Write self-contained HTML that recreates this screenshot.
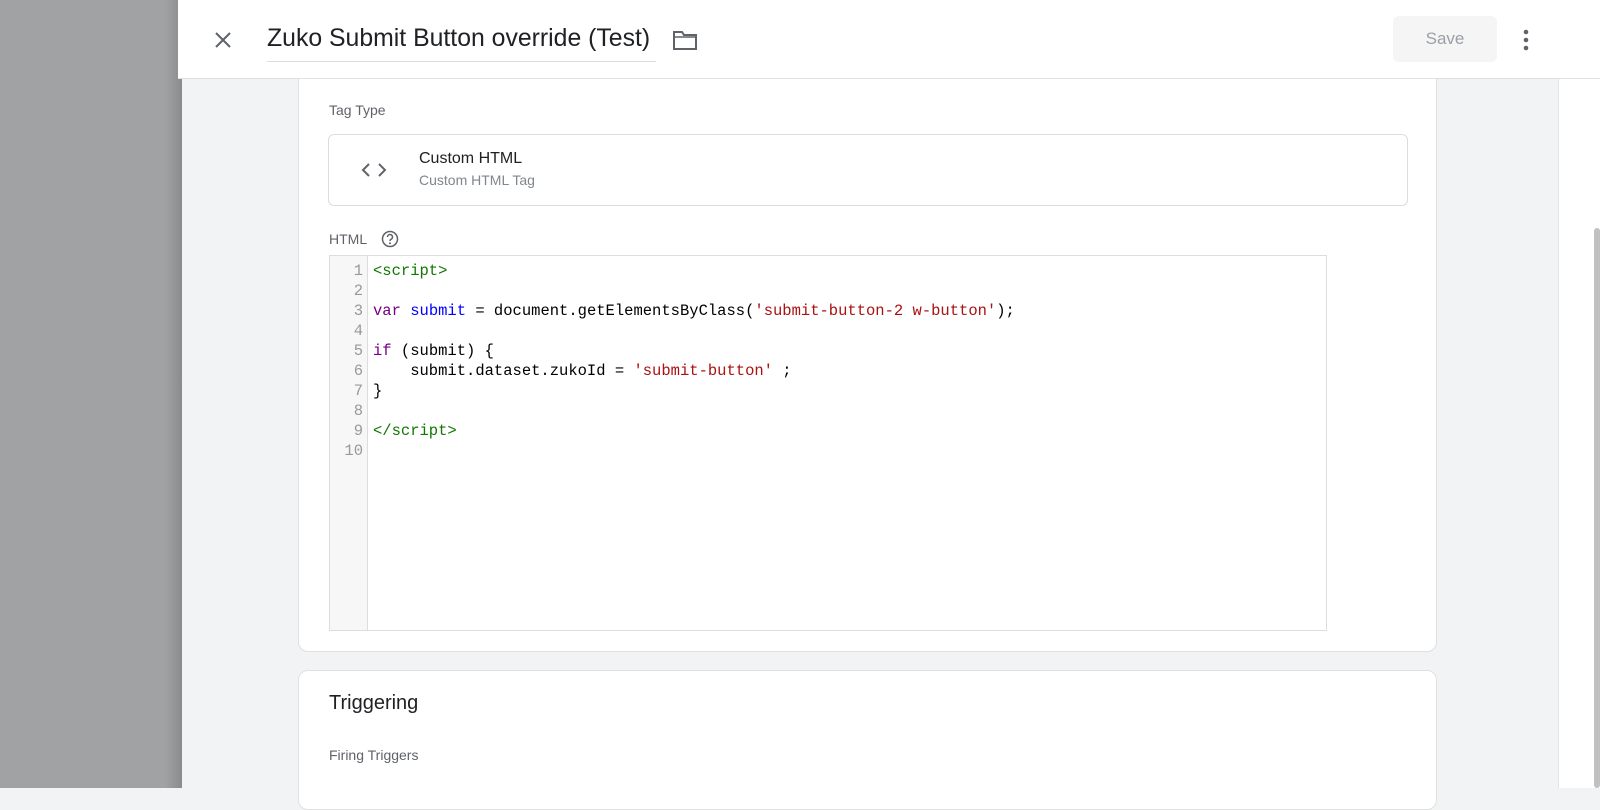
<!DOCTYPE html>
<html><head><style>
*{margin:0;padding:0;box-sizing:border-box}
body{width:1600px;height:788px;overflow:hidden;background:#f1f3f4;font-family:"Liberation Sans",sans-serif;position:relative}
.left{position:absolute;left:0;top:0;width:182px;height:788px;background:linear-gradient(to right,#a1a2a4 0,#a1a2a4 165px,#8a8b8d 182px)}
.hdr{position:absolute;left:178px;top:0;width:1422px;height:79px;background:#fff;border-bottom:1px solid #e0e0e0;z-index:2}
.card{position:absolute;left:298px;width:1139px;background:#fff;border:1px solid #e0e0e0;border-radius:10px}
.code{position:absolute;left:329px;top:255px;width:998px;height:376px;border:1px solid #ddd;background:#fff;font-family:"Liberation Mono",monospace;font-size:15.5px;line-height:20px}
.gut{position:absolute;left:0;top:0;width:38px;height:100%;background:#f7f7f7;border-right:1px solid #ddd;color:#999;text-align:right;padding:5px 4px 0 0}
.lines{position:absolute;left:43px;top:5px;white-space:pre;color:#000}
.t{color:#170}.k{color:#708}.v{color:#00f}.s{color:#a11}
.scroll{position:absolute;left:1558px;top:79px;width:42px;height:709px;background:#fff;border-left:1px solid #e4e4e4}
.thumb{position:absolute;left:1594px;top:228px;width:6px;height:560px;background:#c1c1c1;border-radius:3px}
</style></head><body>
<div class="left"></div>
<div class="card" style="top:60px;height:592px"></div>
<div class="card" style="top:670px;height:140px"></div>
<div class="hdr">
<svg style="position:absolute;left:36px;top:31px" width="18" height="18" viewBox="0 0 18 18"><path d="M2 2L16 16M16 2L2 16" stroke="#5f6368" stroke-width="2"/></svg>
<div style="position:absolute;left:89px;top:25px;font-size:24.8px;color:#202124;width:389px;border-bottom:1px solid #dadce0;height:37px;white-space:nowrap">Zuko Submit Button override (Test)</div>
<svg style="position:absolute;left:494px;top:29px" width="26" height="22" viewBox="0 0 26 22"><path d="M2 3h8l2 3h12v14H2z" fill="none" stroke="#5f6368" stroke-width="2"/><path d="M2 8h22" stroke="#5f6368" stroke-width="1.5"/></svg>
<div style="position:absolute;left:1215px;top:16px;width:104px;height:46px;background:#f5f5f5;border-radius:6px;color:#9aa0a6;font-size:17px;text-align:center;line-height:46px">Save</div>
<svg style="position:absolute;left:1345px;top:29px" width="6" height="22" viewBox="0 0 6 22"><circle cx="3" cy="3" r="2.3" fill="#5f6368"/><circle cx="3" cy="11" r="2.3" fill="#5f6368"/><circle cx="3" cy="19" r="2.3" fill="#5f6368"/></svg>
</div>
<div style="position:absolute;left:329px;top:102px;font-size:14px;color:#5f6368">Tag Type</div>
<div style="position:absolute;left:328px;top:134px;width:1080px;height:72px;border:1px solid #dadce0;border-radius:6px;background:#fff">
<svg style="position:absolute;left:32px;top:27px" width="26" height="16" viewBox="0 0 26 16"><path d="M8 2L2 8l6 6M18 2l6 6-6 6" fill="none" stroke="#5f6368" stroke-width="2"/></svg>
<div style="position:absolute;left:90px;top:15px;font-size:16px;color:#202124">Custom HTML</div>
<div style="position:absolute;left:90px;top:37px;font-size:14px;color:#80868b">Custom HTML Tag</div>
</div>
<div style="position:absolute;left:329px;top:231px;font-size:14px;color:#5f6368">HTML</div>
<svg style="position:absolute;left:381px;top:230px" width="18" height="18" viewBox="0 0 18 18"><circle cx="9" cy="9" r="7.5" fill="none" stroke="#5f6368" stroke-width="1.5"/><path d="M6.5 7a2.5 2.5 0 1 1 3.5 2.3c-.8.4-1 .9-1 1.7" fill="none" stroke="#5f6368" stroke-width="1.5"/><circle cx="9" cy="13.3" r="1" fill="#5f6368"/></svg>
<div class="code"><div class="gut">1<br>2<br>3<br>4<br>5<br>6<br>7<br>8<br>9<br>10</div><div class="lines"><span class="t">&lt;script&gt;</span>

<span class="k">var</span> <span class="v">submit</span> = document.getElementsByClass(<span class="s">'submit-button-2 w-button'</span>);

<span class="k">if</span> (submit) {
    submit.dataset.zukoId = <span class="s">'submit-button'</span> ;
}

<span class="t">&lt;/script&gt;</span>
</div></div>
<div style="position:absolute;left:329px;top:692px;font-size:20px;color:#202124">Triggering</div>
<div style="position:absolute;left:329px;top:747px;font-size:14px;color:#5f6368">Firing Triggers</div>
<div class="scroll"></div><div class="thumb"></div>
</body></html>
